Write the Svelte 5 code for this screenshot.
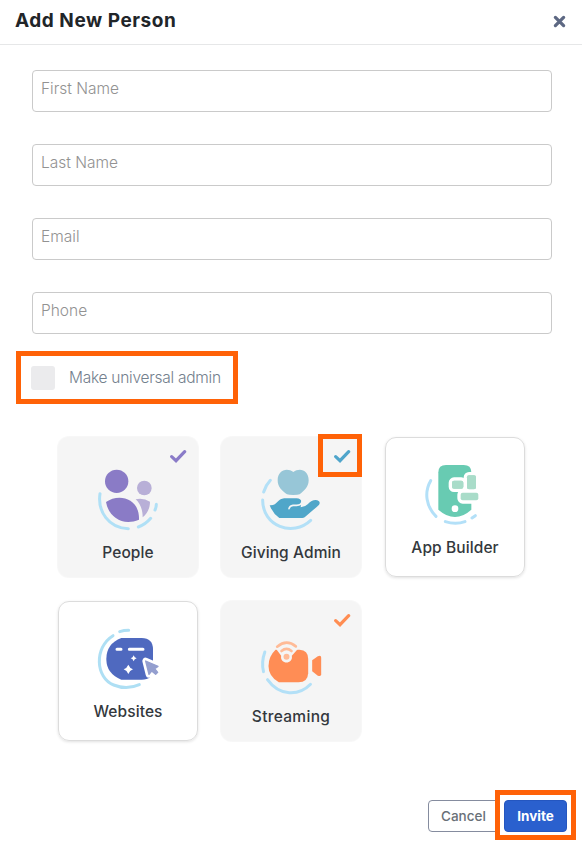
<script>
  const fields = ['First Name', 'Last Name', 'Email', 'Phone'];
  const apps = [
    { id: 'people', label: 'People', view: '114 90 240 220', check: '#8a7bc8' },
    { id: 'giving', label: 'Giving Admin', view: '117 90 240 220', check: '#4fa5cb', marked: true },
    { id: 'builder', label: 'App Builder', view: '120 90 240 220' },
    { id: 'websites', label: 'Websites', view: '113 87 240 220' },
    { id: 'streaming', label: 'Streaming', view: '117.5 87 240 220', check: '#ff8d52' }
  ];
</script>

<div class="dialog">
  <header>
    <h1>Add New Person</h1>
    <button class="close" aria-label="Close">
      <svg width="13" height="13" viewBox="0 0 12 12"><path d="M2.2 2.2 9.8 9.8M9.8 2.2 2.2 9.8" stroke="#5d6883" stroke-width="3" stroke-linecap="round" /></svg>
    </button>
  </header>

  <form>
    {#each fields as f}
      <input placeholder={f} aria-label={f} />
    {/each}
  </form>

  <div class="universal">
    <span class="box"></span>
    <span class="utext">Make universal admin</span>
  </div>

  <div class="grid">
    {#each apps as app}
      <div class="card {app.id}" class:selected={app.check}>
        {#if app.check}
          <svg class="check" width="17" height="13" viewBox="0 0 51 39"><path d="M5 20 18 32 44 5" fill="none" stroke={app.check} stroke-width="9.5" stroke-linecap="round" stroke-linejoin="miter" /></svg>
        {/if}
        {#if app.marked}<span class="mark"></span>{/if}
        <svg class="icon" width="80" height="73.33" viewBox={app.view} fill="none" stroke-linecap="round">
          {#if app.id === 'people'}
            <g stroke="#b0e0f6" stroke-width="9">
              <path d="M150 191C142 244 176 295 235 296" />
              <path d="M265 291Q287 283 302 265M315 240Q319 232 319 223" />
            </g>
            <circle cx="200" cy="154" r="35" fill="#8a7bc6" />
            <circle cx="283" cy="174" r="22" fill="#b8afd7" />
            <path d="M168 216C205 190 266 203 267 264V269C218 289 176 262 168 216Z" fill="#8a7bc6" />
            <path d="M257 208Q280 203 300 215C300 236 291 251 278 262C278 240 272 222 257 208Z" fill="#b8afd7" />
          {:else if app.id === 'giving'}
            <g stroke="#b3e0f7" stroke-width="9">
              <path d="M175 151Q161 166 155 186M152 210C151 288 243 322 296 271" />
            </g>
            <path d="M225 193C210 183 197 171 197 151C197 121 224 112 244 126C264 112 290 121 290 151C290 171 276 183 263 193Q258 195 244 195T225 193Z" fill="#97c6d7" />
            <path d="M173 226C186 227 190 222 199 213C208 204 217 205 229 205H254C262 205 268 209 268 215L266 232Q278 232 288 222C298 212 311 206 321 214C326 220 321 226 315 230L278 262Q275 264 271 264H202Q182 250 173 226Z" fill="#50a6c9" />
            <path d="M231 236Q233 227 243 226H254C265 226 269 222 270 215" stroke="#f5f5f5" stroke-width="5" />
          {:else if app.id === 'builder'}
            <g stroke="#b3e0f8" stroke-width="9">
              <path d="M167 152C147 187 153 229 183 259M211 275Q242 285 270 275M291 264 301 257" />
            </g>
            <path d="M190 127Q190 105 213 105H266Q289 105 289 127V239Q240 283 190 239Z" fill="#68cbb2" />
            <circle cx="240" cy="236" r="10" fill="#fff" />
            <g fill="#a9dcc9" stroke="#fff" stroke-width="20" stroke-linejoin="round" paint-order="stroke">
              <rect x="276" y="136" width="27" height="42" rx="6" />
              <rect x="231" y="152" width="34" height="24" rx="6" />
              <rect x="257" y="188" width="53" height="23" rx="6" />
            </g>
            <rect x="276" y="136" width="27" height="42" rx="6" fill="#a9dcc9" />
            <rect x="231" y="152" width="34" height="24" rx="6" fill="#a9dcc9" />
          {:else if app.id === 'websites'}
            <path d="M188 122C130 158 136 249 190 270Q229 286 267 269M208 110Q221 106 235 106" stroke="#aedff4" stroke-width="9" />
            <path d="M213 129H274Q308 130 308 163V222Q308 254 274 254H213Q168 236 168 192Q168 146 213 129Z" fill="#4f69bf" />
            <path d="M200 163H212M237 163H278" stroke="#fff" stroke-width="9" />
            <path d="M250 181Q252 188 259 190Q252 192 250 199Q248 192 241 190Q248 188 250 181ZM234 209Q238 219 248 223Q238 227 234 237Q230 227 220 223Q230 219 234 209Z" fill="#fff" />
            <path d="M286 198 296 238 304 230 316 240 323 232 314 222 324 215Z" fill="#fff" stroke="#fff" stroke-width="20" stroke-linejoin="round" />
            <path d="M286 198 296 238 304 228 316 238 322 232 313 221 323 214Z" fill="#949fcf" stroke="#949fcf" stroke-width="4" stroke-linejoin="round" />
          {:else}
            <path d="M159 171Q148 201 155 230M167 254C203 305 262 303 296 268" stroke="#b3e0f7" stroke-width="9" />
            <path d="M191 164H263Q289 166 289 191V235Q288 262 260 262H201Q170 244 170 213Q170 184 191 164Z" fill="#ff8d55" />
            <path d="M301 196 318 184Q328 179 328 188V238Q328 246 318 242L301 229Z" fill="#ff8d55" />
            <path d="M188 155 208 182C203 209 245 209 240 182L264 155Q225 127 188 155Z" fill="#f5f5f5" />
            <circle cx="224" cy="185" r="9" fill="#ffbb97" />
            <path d="M196 155Q224 132 252 154M209 168Q224 156 239 168" stroke="#ffbb97" stroke-width="8" />
          {/if}
        </svg>
        <span class="label">{app.label}</span>
      </div>
    {/each}
  </div>

  <footer>
    <button class="cancel">Cancel</button>
    <div class="frame"><button class="invite">Invite</button></div>
  </footer>
</div>

<style>
  :global(body) { background: #fff; }
  .dialog {
    box-sizing: border-box;
    width: 582px;
    height: 847px;
    overflow: hidden;
    background: #fff;
    font-family: Inter, "Liberation Sans", sans-serif;
    display: flex;
    flex-direction: column;
  }
  header {
    box-sizing: border-box;
    height: 45px;
    border-bottom: 1px solid #e6e7e8;
    padding: 0 16px 2px 15px;
    display: flex;
    align-items: center;
    justify-content: space-between;
    flex: none;
  }
  h1 { margin: 0; font-size: 19px; line-height: 24px; font-weight: 700; color: #212529; letter-spacing: 0.54px; }
  button { font-family: inherit; }
  .close { border: 0; padding: 0; background: none; display: flex; }
  form { display: flex; flex-direction: column; gap: 32px; padding: 25px 30px 0 32px; }
  input {
    box-sizing: border-box;
    width: 520px;
    height: 42px;
    border: 1px solid #cacaca;
    border-radius: 4px;
    padding: 0 8px 5px;
    font: 300 15.5px Inter, "Liberation Sans", sans-serif;
    background: #fff;
    outline: 0;
  }
  input::placeholder { color: #929292; opacity: 1; }
  .universal {
    box-sizing: border-box;
    width: 222px;
    height: 53px;
    margin: 17px 0 0 16px;
    border: 5px solid #ff6207;
    display: flex;
    align-items: center;
    padding-left: 10px;
    gap: 14px;
    flex: none;
  }
  .box { width: 24px; height: 24px; border-radius: 3px; background: #ebebed; }
  .utext { font-size: 15.5px; font-weight: 300; color: #73808d; white-space: nowrap; letter-spacing: -0.26px; }
  .grid {
    display: grid;
    grid-template-columns: 142px 142px 142px;
    grid-auto-rows: 142px;
    gap: 22px 21px;
    width: 469px;
    margin: 32px 0 0 57px;
    place-items: center;
  }
  .card {
    position: relative;
    box-sizing: border-box;
    width: 140px;
    height: 140px;
    border: 1px solid #dcdcdc;
    border-radius: 11px;
    box-shadow: 0 1px 3px rgba(0, 0, 0, 0.12);
    padding-top: 22px;
    display: flex;
    flex-direction: column;
    align-items: center;
  }
  .builder { margin-left: 2px; }
  .selected { width: 142px; height: 142px; border: 0; border-radius: 12px; padding-top: 24px; background: #f5f5f5; box-shadow: inset 0 0 2px #fff; }
  .icon { display: block; flex: none; }
  .label { font-size: 15.5px; line-height: 20px; font-weight: 500; color: #33383d; margin-top: 5px; white-space: nowrap; letter-spacing: 0.1px; }
  .streaming .label { letter-spacing: 0.3px; }
  .selected .label { margin-top: 10px; }
  .check { position: absolute; right: 11px; top: 13.5px; }
  .people .check { right: 12px; }
  .mark { position: absolute; box-sizing: border-box; width: 44px; height: 43px; right: 0; top: -2px; border: 5px solid #ff6207; }
  footer { display: flex; padding: 48px 6px 0 0; justify-content: flex-end; align-items: center; }
  .cancel {
    box-sizing: border-box;
    width: 75px;
    height: 32px;
    margin: 2px -8px 0 0;
    border: 1px solid #858c9f;
    border-radius: 4px;
    background: #fff;
    color: #697078;
    font-size: 13.5px;
    font-weight: 500;
    padding: 0 0 0 12px;
    text-align: left;
  }
  .frame { position: relative; box-sizing: border-box; width: 81px; height: 50px; border: 5px solid #ff6207; background: #fff; padding: 5px 4px; display: flex; }
  .invite { width: 63px; height: 32px; border: 1px solid #2456c0; border-radius: 4px; background: #2a60ce; color: #fff; font-size: 13.5px; font-weight: 700; padding: 0; }
</style>
